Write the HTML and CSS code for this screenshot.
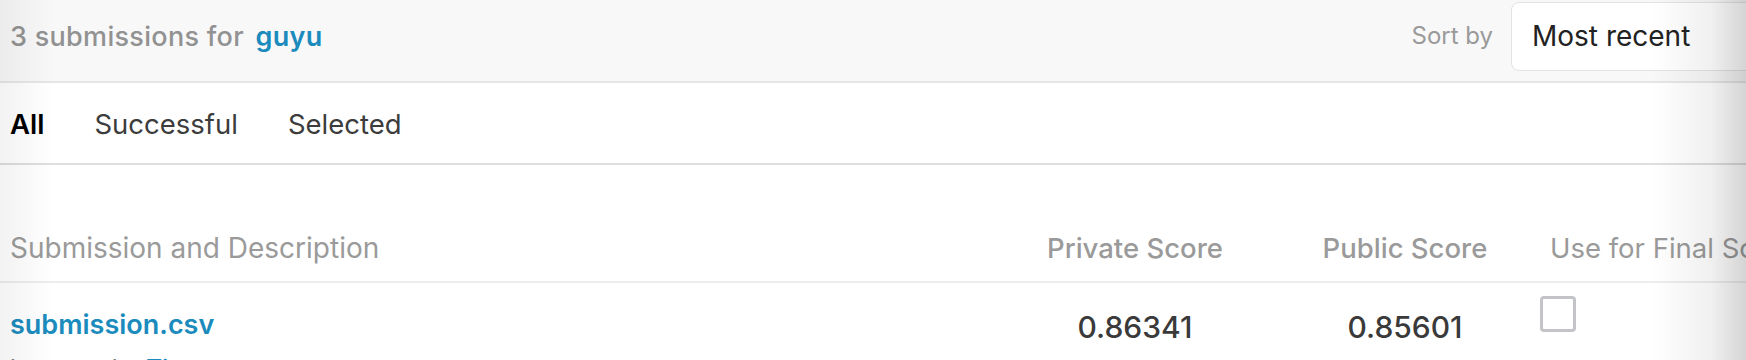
FILE: index.html
```html
<!DOCTYPE html>
<html lang="en">
<head>
<meta charset="utf-8">
<title>Submissions</title>
<link rel="stylesheet" href="styles.css">
</head>
<body>
<div class="page">
  <header class="topbar">
    <div class="count">3 submissions for <a class="user" href="#">guyu</a></div>
    <div class="sort">
      <span class="sort-label">Sort by</span>
      <div class="select">Most recent</div>
    </div>
  </header>
  <nav class="tabs">
    <span class="tab active">All</span>
    <span class="tab">Successful</span>
    <span class="tab">Selected</span>
  </nav>
  <div class="table">
    <div class="row head">
      <div class="cell desc">Submission and Description</div>
      <div class="cell score">Private Score</div>
      <div class="cell score">Public Score</div>
      <div class="cell final">Use for Final Score</div>
    </div>
    <div class="row item">
      <div class="cell desc">
        <a class="file" href="#">submission.csv</a>
        <div class="meta">just now by <a class="author" href="#">Tianyu</a></div>
      </div>
      <div class="cell score num">0.86341</div>
      <div class="cell score num">0.85601</div>
      <div class="cell final"><span class="checkbox"></span></div>
    </div>
  </div>
  <div class="shade"></div>
</div>
</body>
</html>
```
FILE: styles.css
```css
html, body {
  margin: 0;
  padding: 0;
  background: #ffffff;
}
body {
  font-family: Inter, "Noto Sans", "Liberation Sans", sans-serif;
  width: 1746px;
  height: 360px;
  overflow: hidden;
}
a { text-decoration: none; }
.page {
  position: relative;
  width: 1746px;
  height: 360px;
  overflow: hidden;
}
.topbar {
  height: 81px;
  background: #f8f8f8;
  border-bottom: 2px solid #e6e6e6;
  display: flex;
  justify-content: space-between;
  align-items: flex-start;
  padding-left: 10px;
}
.count {
  font-size: 27px;
  font-weight: 500;
  letter-spacing: 0.3px;
  color: #929292;
  line-height: 30px;
  margin-top: 22px;
}
.user {
  color: #1b8bbd;
  font-weight: 600;
  margin-left: 4px;
}
.sort {
  display: flex;
  align-items: flex-start;
  gap: 18px;
  margin-right: -20px;
}
.sort-label {
  font-size: 24px;
  color: #9a9a9a;
  line-height: 30px;
  margin-top: 21px;
}
.select {
  margin-top: 2px;
  width: 233px;
  height: 67px;
  background: #ffffff;
  border: 1px solid #e3e3e3;
  border-radius: 8px;
  padding-left: 20px;
  font-size: 28px;
  color: #222222;
  line-height: 67px;
  box-sizing: content-box;
}
.tabs {
  height: 80px;
  border-bottom: 2px solid #dedede;
  display: flex;
  align-items: center;
  gap: 50px;
  padding-left: 10px;
}
.tab {
  font-size: 27.5px;
  color: #3c3c3c;
  line-height: 30px;
  padding-top: 2px;
}
.tab.active {
  color: #000000;
  font-weight: 600;
}
.table {
  padding-left: 10px;
}
.row {
  display: grid;
  grid-template-columns: 990px 270px 270px 1fr;
}
.head {
  border-bottom: 2px solid #ededed;
  margin-left: -10px;
  padding-left: 10px;
}
.head .cell {
  padding-top: 68px;
  padding-bottom: 18px;
  line-height: 30px;
  font-size: 27.5px;
  color: #9a9a9a;
  white-space: nowrap;
}
.head .desc { font-size: 28px; }
.score { text-align: center; }
.head .score { font-weight: 500; }
.head .final { padding-left: 10px; }
.item .cell {
  padding-top: 27px;
}
.file {
  display: block;
  font-size: 27px;
  font-weight: 600;
  color: #1b8bbd;
  line-height: 30px;
}
.meta {
  margin-top: 14px;
  font-size: 24px;
  color: #777777;
  line-height: 30px;
}
.author { color: #1b8bbd; font-weight: 600; }
.num {
  font-size: 30px;
  font-weight: 500;
  color: #3a3a3a;
  line-height: 34px;
}
.item .final { padding-top: 13px; }
.checkbox {
  display: block;
  width: 30px;
  height: 30px;
  border: 3px solid #c2c4c8;
  border-radius: 4px;
}
.shade {
  position: absolute;
  inset: 0;
  pointer-events: none;
  background:
    linear-gradient(to right, rgba(0,0,0,0.05), rgba(0,0,0,0) 55px),
    linear-gradient(to left, rgba(0,0,0,0.17), rgba(0,0,0,0.06) 35px, rgba(0,0,0,0) 95px);
}
```
